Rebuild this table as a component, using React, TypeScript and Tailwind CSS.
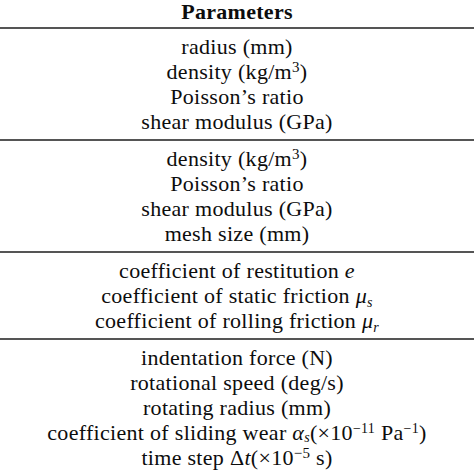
const groups: React.ReactNode[][] = [
  [
    'radius (mm)',
    <>density (kg/m<sup className="text-[15px]">3</sup>)</>,
    'Poisson’s ratio',
    'shear modulus (GPa)',
  ],
  [
    <>density (kg/m<sup className="text-[15px]">3</sup>)</>,
    'Poisson’s ratio',
    'shear modulus (GPa)',
    'mesh size (mm)',
  ],
  [
    <>coefficient of restitution <i>e</i></>,
    <>coefficient of static friction <i>μ</i><sub className="text-[14px] italic">s</sub></>,
    <>coefficient of rolling friction <i>μ</i><sub className="text-[14px] italic">r</sub></>,
  ],
  [
    'indentation force (N)',
    'rotational speed (deg/s)',
    'rotating radius (mm)',
    <>
      coefficient of sliding wear <i>α</i>
      <sub className="text-[14px] italic bottom-[-0.15em]">s</sub>(×10
      <sup className="text-[14px]">−11</sup> Pa<sup className="text-[14px]">−1</sup>)
    </>,
    <>time step Δ<i>t</i>(×10<sup className="text-[15px] top-[-0.45em]">−5</sup> s)</>,
  ],
];

export default function App() {
  return (
    <div
      className="w-[474px] h-[474px] bg-white text-[#0d0d0d] text-center text-[22px] tracking-[0.3px] overflow-hidden"
      style={{ fontFamily: '"Liberation Serif", "DejaVu Serif", serif' }}
    >
      <div className="h-[27px] leading-[24px] font-bold">Parameters</div>
      {groups.map((rows, gi) => (
        <div key={gi}>
          <div className="h-[2px] bg-[#555]" />
          <div className="py-[5px] leading-[25px]">
            {rows.map((row, ri) => (
              <div key={ri} className="whitespace-nowrap">
                {row}
              </div>
            ))}
          </div>
        </div>
      ))}
    </div>
  );
}
